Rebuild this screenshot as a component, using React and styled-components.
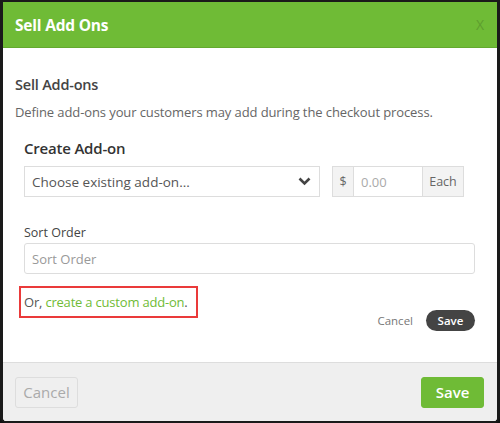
import styled, { createGlobalStyle } from "styled-components";

const GlobalStyle = createGlobalStyle`
    html, body {
        margin: 0;
        padding: 0;
        background: #111;
    }
    * {
        box-sizing: border-box;
    }
`;

const green = "#6fbb36";

const Modal = styled.div`
    width: 500px;
    height: 423px;
    border-style: solid;
    border-color: #1a1a1a;
    border-width: 2px 3px 2px 3px;
    border-radius: 0 0 6px 6px;
    background: #fff;
    display: flex;
    flex-direction: column;
    overflow: hidden;
    font-family: "Open Sans", "Noto Sans", sans-serif;
    color: #555;
`;

const Header = styled.header`
    height: 46px;
    flex: none;
    background: ${green};
    border-bottom: 1px solid #63a92f;
    display: flex;
    align-items: center;
    justify-content: space-between;
    padding: 0 13px 0 12px;
`;

const Title = styled.h1`
    margin: 0;
    font-size: 15.5px;
    font-weight: 700;
    color: #fff;
    letter-spacing: -0.2px;
`;

const Close = styled.span`
    font-size: 14px;
    color: #5e9e2f;
`;

const Body = styled.main`
    flex: 1;
    padding: 27px 22px 0 12px;
`;

const SectionTitle = styled.h2`
    margin: 0;
    font-size: 14.5px;
    font-weight: 600;
    color: #444;
    letter-spacing: -0.2px;
`;

const Lead = styled.p`
    margin: 9px 0 0;
    font-size: 13px;
    color: #666;
    letter-spacing: -0.1px;
`;

const Form = styled.div`
    padding-left: 9px;
    margin-top: 17px;
`;

const FormTitle = styled.h3`
    margin: 0;
    font-size: 15px;
    font-weight: 600;
    color: #333;
    letter-spacing: -0.2px;
`;

const Row = styled.div`
    display: flex;
    align-items: center;
    gap: 12px;
    margin-top: 8px;
`;

const Select = styled.div`
    width: 296px;
    height: 31px;
    border: 1px solid #ddd;
    display: flex;
    align-items: center;
    justify-content: space-between;
    padding: 0 8px 0 7px;
    font-size: 13.5px;
    color: #555;
`;

const Group = styled.div`
    display: flex;
    height: 31px;
    border: 1px solid #ddd;
`;

const Addon = styled.span`
    background: #f3f3f3;
    display: flex;
    align-items: center;
    justify-content: center;
    width: ${(p) => p.w}px;
    font-size: 12.5px;
    color: #666;
    border-left: ${(p) => (p.right ? "1px solid #ddd" : "none")};
    border-right: ${(p) => (p.right ? "none" : "1px solid #ddd")};
`;

const MoneyInput = styled.span`
    width: 68px;
    display: flex;
    align-items: center;
    padding-left: 7px;
    font-size: 13px;
    color: #aaa;
`;

const Label = styled.label`
    display: block;
    margin-top: 27px;
    font-size: 12.5px;
    color: #444;
`;

const TextInput = styled.div`
    margin-top: 2px;
    height: 31px;
    border: 1px solid #ddd;
    border-radius: 3px;
    display: flex;
    align-items: center;
    padding-left: 7px;
    font-size: 13px;
    color: #999;
`;

const ActionLine = styled.div`
    display: flex;
    justify-content: space-between;
    margin-top: 12px;
    margin-left: -5px;
`;

const Highlight = styled.div`
    align-self: flex-start;
    width: 179px;
    height: 32px;
    border: 2px solid #ea3a3a;
    display: flex;
    align-items: center;
    padding-left: 3px;
    font-size: 13px;
    color: #555;
    letter-spacing: -0.2px;
    white-space: nowrap;
`;

const Link = styled.a`
    color: ${green};
    text-decoration: none;
`;

const InlineActions = styled.div`
    align-self: flex-end;
    margin-bottom: -13px;
    display: flex;
    align-items: center;
    gap: 13px;
`;

const TextButton = styled.button`
    border: none;
    background: none;
    padding: 0;
    font-family: inherit;
    font-size: 11.5px;
    color: #777;
`;

const Pill = styled.button`
    border: none;
    background: #444;
    color: #fff;
    width: 49px;
    height: 21px;
    border-radius: 11px;
    font-family: inherit;
    font-size: 11.5px;
    font-weight: 600;
    padding: 0;
`;

const Footer = styled.footer`
    height: 59px;
    flex: none;
    background: #efefef;
    border-top: 1px solid #ddd;
    display: flex;
    align-items: center;
    justify-content: space-between;
    padding: 0 13px 0 12px;
`;

const FooterButton = styled.button`
    height: 31px;
    width: 63px;
    border-radius: 3px;
    font-family: inherit;
    font-size: 15px;
    padding: 0;
    border: 1px solid ${(p) => (p.primary ? green : "#ddd")};
    background: ${(p) => (p.primary ? green : "#efefef")};
    color: ${(p) => (p.primary ? "#fff" : "#aaa")};
    font-weight: ${(p) => (p.primary ? 600 : 400)};
`;

const Chevron = () => (
    <svg width="13" height="9" viewBox="0 0 13 9">
        <path d="M1.5 1.5 L6.5 6.5 L11.5 1.5" fill="none" stroke="#444" strokeWidth="2.6" />
    </svg>
);

const App = () => {
    return (
        <>
            <GlobalStyle />
            <Modal>
                <Header>
                    <Title>Sell Add Ons</Title>
                    <Close>X</Close>
                </Header>

                <Body>
                    <SectionTitle>Sell Add-ons</SectionTitle>
                    <Lead>Define add-ons your customers may add during the checkout process.</Lead>

                    <Form>
                        <FormTitle>Create Add-on</FormTitle>
                        <Row>
                            <Select>
                                Choose existing add-on...
                                <Chevron />
                            </Select>
                            <Group>
                                <Addon w={21}>$</Addon>
                                <MoneyInput>0.00</MoneyInput>
                                <Addon w={41} right>Each</Addon>
                            </Group>
                        </Row>

                        <Label>Sort Order</Label>
                        <TextInput>Sort Order</TextInput>

                        <ActionLine>
                            <Highlight>
                                <span>
                                    Or, <Link href="#">create a custom add-on</Link>.
                                </span>
                            </Highlight>
                            <InlineActions>
                                <TextButton>Cancel</TextButton>
                                <Pill>Save</Pill>
                            </InlineActions>
                        </ActionLine>
                    </Form>
                </Body>

                <Footer>
                    <FooterButton>Cancel</FooterButton>
                    <FooterButton primary>Save</FooterButton>
                </Footer>
            </Modal>
        </>
    );
};

export default App;
